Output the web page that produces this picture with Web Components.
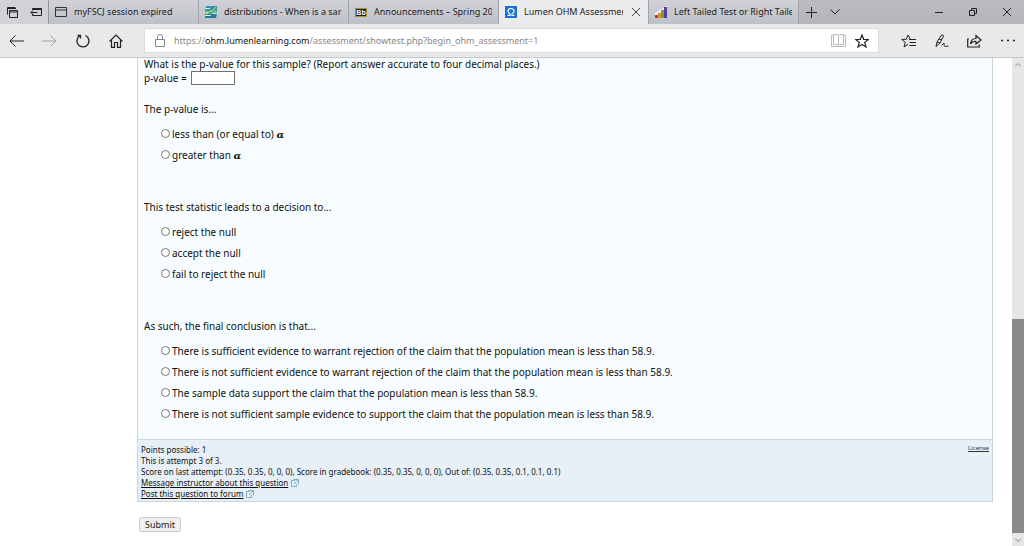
<!DOCTYPE html>
<html lang="en">
<head>
<meta charset="utf-8">
<title>Lumen OHM Assessment</title>
<style>
html, body { height: 100%; }
body { margin: 0; display: flex; flex-direction: column; overflow: hidden; background: #fff; color: #111; font: 10px/16px "Noto Sans", "Open Sans", sans-serif; }
svg { display: block; }
</style>
</head>
<body>
<tab-strip>
  <browser-tab>
    <svg slot="icon" width="12" height="12" viewBox="0 0 12 12" fill="none" stroke="#333"><path d="M.5 1.5h11v9H.5zM.5 4h11"/></svg>
    myFSCJ session expired
  </browser-tab>
  <browser-tab>
    <svg slot="icon" width="12" height="12" viewBox="0 0 12 12"><path d="M1 0h11v4H0z" fill="#3d8fae"/><path d="M0 4h12v4H0z" fill="#46a6a0"/><path d="M0 8h12l-1 4H0z" fill="#1d7fa0"/><path d="M0 2.500h5M0 6.500h3M0 9.500h6M8 7.500h4" stroke="#d5ecf0"/><path d="M1 9l3-3 3-1 4-4M7 8l4-3" stroke="#d2dc4e" fill="none"/></svg>
    distributions - When is a sar
  </browser-tab>
  <browser-tab>
    <svg slot="icon" width="12" height="12" viewBox="0 0 12 12"><rect x=".5" y="2.500" width="11" height="8" fill="#222" stroke="#b08a3c"/><text x="6" y="9" text-anchor="middle" font-family="Liberation Sans" font-weight="700" font-size="7" fill="#fff">Bb</text></svg>
    Announcements – Spring 202
  </browser-tab>
  <browser-tab active>
    <svg slot="icon" width="12" height="12" viewBox="0 0 12 12"><path d="M0 0h12v12H0z" fill="#1b74d2"/><path d="M2.500 9.500h2.500V8C2 6.500 2.500 2.500 6 2.500S10 6.500 7 8v1.500h2.500" fill="none" stroke="#fff" stroke-width="1.200"/></svg>
    Lumen OHM Assessment
  </browser-tab>
  <browser-tab>
    <svg slot="icon" width="12" height="12" viewBox="0 0 12 12"><path d="M0 12V7L11 0h1v12z" fill="#f4eef4"/><path d="M0 9h3v3H0z" fill="#c33"/><path d="M3 7h3v5H3z" fill="#e0902a"/><path d="M6 4h3v8H6z" fill="#6aa832"/><path d="M9 1h3v11H9z" fill="#5b3a9c"/></svg>
    Left Tailed Test or Right Tailed
  </browser-tab>
</tab-strip>
<address-bar></address-bar>
<page-view>
  <question-card>
    <value-prompt></value-prompt>
    <choice-group name="pvalue" heading="The p-value is...">
      <span>less than (or equal to) <math-symbol>α</math-symbol></span>
      <span>greater than <math-symbol>α</math-symbol></span>
    </choice-group>
    <choice-group name="decision" heading="This test statistic leads to a decision to...">
      <span>reject the null</span>
      <span>accept the null</span>
      <span>fail to reject the null</span>
    </choice-group>
    <choice-group name="conclusion" heading="As such, the final conclusion is that...">
      <span>There is sufficient evidence to warrant rejection of the claim that the population mean is less than 58.9.</span>
      <span>There is not sufficient evidence to warrant rejection of the claim that the population mean is less than 58.9.</span>
      <span>The sample data support the claim that the population mean is less than 58.9.</span>
      <span>There is not sufficient sample evidence to support the claim that the population mean is less than 58.9.</span>
    </choice-group>
    <score-summary slot="footer"></score-summary>
  </question-card>
  <submit-button>Submit</submit-button>
</page-view>

<script>
function define(name, html, setup) {
  const template = document.createElement('template');
  template.innerHTML = html;
  customElements.define(name, class extends HTMLElement {
    connectedCallback() {
      if (this.shadowRoot) return;
      this.attachShadow({ mode: 'open' }).append(template.content.cloneNode(true));
      if (setup) setup(this, this.shadowRoot);
    }
  });
}

const iconButton = `button { border: 0; padding: 0; background: none; display: grid; place-items: center; color: inherit; }
  svg { display: block; fill: none; stroke: currentColor; }`;

define('tab-strip', `<style>
  :host { display: flex; flex: none; height: 24px; background: linear-gradient(#babcc2, #b4b5ba); color: #222; }
  ${iconButton}
  .left { display: flex; flex: none; box-sizing: border-box; width: 49px; border-right: 1px solid #94969c; background: #d0d2d8; }
  .left button { width: 24px; }
  .tabs { display: flex; flex: 0 1 750px; min-width: 0; }
  .new button { width: 24px; }
  .new { display: flex; }
  .window { display: flex; margin-left: auto; }
  .window button { width: 34px; }
</style>
<div class="left">
  <button aria-label="Tabs you've set aside"><svg width="12" height="12" viewBox="0 0 12 12"><path d="M3.500 4.500h8v7h-8zM3.500 6h8M1.500 8.500v-7h8M1 2.500h9"/></svg></button>
  <button aria-label="Set these tabs aside"><svg width="12" height="10" viewBox="0 0 12 10"><path d="M2.500 3V1.500h9v7h-9V7M3 2.500h8M.5 5.500h7M3 3.500l-2 2 2 2"/></svg></button>
</div>
<div class="tabs"><slot></slot></div>
<div class="new">
  <button aria-label="New tab"><svg width="11" height="11" viewBox="0 0 11 11"><path d="M5.500 0v11M0 5.500h11"/></svg></button>
  <button aria-label="Show tab previews"><svg width="10" height="6" viewBox="0 0 10 6" stroke="#555"><path d="M.5.5L5 5 9.500.5"/></svg></button>
</div>
<div class="window">
  <button aria-label="Minimize"><svg width="8" height="8" viewBox="0 0 8 8"><path d="M0 4.500h8"/></svg></button>
  <button aria-label="Restore"><svg width="8" height="8" viewBox="0 0 8 8"><path d="M.5 2.500h5v5h-5zM2.500 2V.5h5v5H6"/></svg></button>
  <button aria-label="Close"><svg width="8" height="8" viewBox="0 0 8 8"><path d="M0 0l8 8M8 0L0 8"/></svg></button>
</div>`);

define('browser-tab', `<style>
  :host { display: flex; align-items: center; flex: 1 1 0; min-width: 0; box-sizing: border-box; padding: 0 6px; gap: 7px;
    background: linear-gradient(#d0d2d8, #bdc0c6); border-right: 1px solid #a1a4aa; font-size: 9px; line-height: 24px; color: #222; }
  :host([active]) { background: #eaebed; border-color: #a1a4aa; }
  .title { flex: 1; min-width: 0; overflow: hidden; white-space: nowrap; }
  button { display: none; border: 0; padding: 0; background: none; width: 12px; height: 12px; }
  :host([active]) button { display: grid; place-items: center; }
</style>
<slot name="icon"></slot><div class="title"><slot></slot></div>
<button aria-label="Close tab"><svg width="8" height="8" viewBox="0 0 8 8" stroke="#444"><path d="M0 0l8 8M8 0L0 8"/></svg></button>`,
(host) => { [...host.childNodes].forEach(n => { if (n.nodeType === 3) n.textContent = n.textContent.trim(); }); });

define('address-bar', `<style>
  :host { display: flex; flex: none; align-items: center; box-sizing: border-box; height: 34px; background: #e9e9eb; border-bottom: 1px solid #c8c8ca; color: #222; }
  ${iconButton}
  button { width: 33px; height: 24px; }
  .url { flex: 1; min-width: 0; display: flex; align-items: center; box-sizing: border-box; height: 25px; margin-left: 12px; background: #fff; border: 1px solid #dcdcde; color: #888; }
  .url button { width: 24px; }
  .lock { width: 29px; display: grid; place-items: center; }
  .text { flex: 1; font-size: 9px; line-height: 20px; white-space: nowrap; overflow: hidden; }
  .text b { font-weight: 400; color: #111; }
  .url .star { color: #222; margin-right: 4px; }
  .actions { display: flex; margin-left: 13px; }
</style>
<button aria-label="Back"><svg width="15" height="12" viewBox="0 0 15 12"><path d="M15 6H1M6.500.5L1 6l5.500 5.500"/></svg></button>
<button aria-label="Forward" style="color:#a0a0a2"><svg width="15" height="12" viewBox="0 0 15 12"><path d="M0 6h14M8.500.5L14 6l-5.500 5.500"/></svg></button>
<button aria-label="Refresh"><svg width="14" height="14" viewBox="0 0 14 14" stroke-width="1.300"><path d="M9.500 1.500a6 6 0 1 1-5.500.2M1.500 1.500h3v3"/></svg></button>
<button aria-label="Home"><svg width="14" height="14" viewBox="0 0 14 14" stroke-width="1.200"><path d="M.5 7.500L7 1l6.500 6.500M2.500 6v7.400h3V8.500h3v4.900h3V6"/></svg></button>
<div class="url">
  <span class="lock"><svg width="10" height="13" viewBox="0 0 10 13"><path d="M.5 5.500h9v7h-9zM2.500 5.500V3a2.500 2.500 0 0 1 5 0v2.500"/></svg></span>
  <span class="text">https://<b>ohm.lumenlearning.com</b>/assessment/showtest.php?begin_ohm_assessment=1</span>
  <button aria-label="Reading view" style="color:#bbb"><svg width="15" height="13" viewBox="0 0 15 13"><path d="M2.500.5h4l1 1 1-1h4v10h-4l-1 1-1-1h-4zM7.500 1v10M2 1.500H.5v11h14v-11H13"/></svg></button>
  <button class="star" aria-label="Add to favorites"><svg width="14" height="14" viewBox="0 0 14 14" stroke-width="1.200"><path d="M7 1l1.700 4.300 4.600.2-3.600 2.900 1.300 4.500L7 10.400l-4 2.500 1.300-4.500L.7 5.500l4.600-.2z"/></svg></button>
</div>
<div class="actions">
  <button aria-label="Favorites"><svg width="16" height="14" viewBox="0 0 16 14"><path d="M9.500 5.300L7 1 5.300 5.300.7 5.500l3.600 2.900L3 12.900l4-2.500M8 5.500h7M8.500 8.500H15M8.500 11.500H15"/></svg></button>
  <button aria-label="Add notes"><svg width="14" height="14" viewBox="0 0 14 14"><path d="M1 12.500L2 8 6 1.500Q8-.2 8.500 2L5 9 1 12.500M2 8l3 1M4 5l3 1M6.500 11.500Q10 7.500 9 10.500q-.3 3 4.500 1.500"/></svg></button>
  <button aria-label="Share"><svg width="15" height="14" viewBox="0 0 15 14" stroke-width="1.200"><path d="M2 5H.7v8h11.500v-2.500M3.500 10Q4 4.500 9 4.500V1.500L14 6 9 10V7.500Q5.500 7 3.500 10z"/></svg></button>
  <button aria-label="Settings and more"><svg width="14" height="3" viewBox="0 0 14 3"><path d="M0 1.500h2M6 1.500h2M12 1.500h2" stroke-width="1.400"/></svg></button>
</div>`);

define('page-view', `<style>
  :host { display: flex; flex: 1; min-height: 0; }
  main { flex: 1; min-width: 0; overflow: hidden; padding: 0 19px 0 137px; }
  .scroll { flex: none; width: 12px; display: flex; flex-direction: column; background: #e6e6e6; }
  .cap { height: 13px; display: grid; place-items: center; }
  .gap { flex: 248; } .thumb { flex: 214; background: #8a8a8a; }
  svg { display: block; fill: none; stroke: #8a8a8a; }
</style>
<main><slot></slot></main>
<div class="scroll"><div class="cap"><svg width="6" height="4" viewBox="0 0 6 4"><path d="M0 3.500l3-3 3 3"/></svg></div>
<div class="gap"></div><div class="thumb"></div>
<div class="cap"><svg width="6" height="4" viewBox="0 0 6 4"><path d="M0 .5l3 3 3-3"/></svg></div></div>`);

define('question-card', `<style>
  :host { display: block; border: solid #c8d6de; border-width: 0 1px 1px; background: #f7fdff; }
  .body { display: flex; flex-direction: column; gap: 34px; padding: 0 6px 15px; }
  footer { border-top: 1px solid #c8d6de; background: #e7f0f6; }
</style>
<div class="body"><slot></slot></div><footer><slot name="footer"></slot></footer>`);

define('value-prompt', `<style>
  :host { display: block; margin-bottom: -19px; line-height: 12px; }
  p { margin: 0; }
  label { display: flex; align-items: center; gap: 4px; height: 16px; }
  input { box-sizing: border-box; width: 44px; height: 14px; padding: 0 2px; border: 1px solid #707070; background: #fff; font: inherit; border-radius: 0; }
</style>
<p>What is the p-value for this sample? (Report answer accurate to four decimal places.)</p>
<label>p-value = <input type="text"></label>`);

define('choice-group', `<style>
  :host { display: block; }
  fieldset { border: 0; margin: 0; padding: 0; min-width: 0; }
  legend { padding: 0; margin-bottom: 6px; }
  label { display: flex; align-items: center; gap: 2px; height: 21px; margin-left: 17px; width: fit-content; white-space: nowrap; }
  input { appearance: none; box-sizing: border-box; width: 9px; height: 9px; margin: 0; border: 1px solid #777; border-radius: 50%; background: #fff; }
  input:checked { background: radial-gradient(#333 40%, #fff 45%); }
</style>
<fieldset><legend></legend></fieldset>`,
(host, root) => {
  root.querySelector('legend').textContent = host.getAttribute('heading');
  [...host.children].forEach((child, i) => {
    child.slot = 'option' + i;
    const label = document.createElement('label');
    label.innerHTML = `<input type="radio" name="${host.getAttribute('name')}" value="${i}"><slot name="option${i}"></slot>`;
    root.querySelector('fieldset').append(label);
  });
});

define('math-symbol', `<style>:host { font: italic bold 10px/12px "DejaVu Serif", serif; }</style><slot></slot>`);

define('external-link', `<style>
  :host { display: flex; gap: 3px; align-items: center; }
  a { color: #111; }
  svg { display: block; fill: none; stroke: #7da9cf; }
</style>
<a href="#"><slot></slot></a>
<svg width="8" height="8" viewBox="0 0 8 8"><path d="M4 1.500H.5v6h5V5M2.500.5h5v5M3 5l4-4"/></svg>`);

define('score-summary', `<style>
  :host { display: flex; justify-content: space-between; align-items: flex-start; padding: 4px 3px 2px; font-size: 8px; line-height: 11px; color: #111; }
  .license { font-size: 6px; line-height: 8px; color: #333; }
</style>
<div><div>Points possible: 1</div><div>This is attempt 3 of 3.</div>
<div>Score on last attempt: (0.35, 0.35, 0, 0, 0), Score in gradebook: (0.35, 0.35, 0, 0, 0), Out of: (0.35, 0.35, 0.1, 0.1, 0.1)</div>
<external-link>Message instructor about this question</external-link>
<external-link>Post this question to forum</external-link></div>
<a class="license" href="#">License</a>`);

define('submit-button', `<style>
  :host { display: block; margin: 15px 2px 0; }
  button { display: block; height: 15px; padding: 0 5px; border: 1px solid #ccc; border-radius: 2px; background: #efefef; color: #222; font: 9px/13px "Noto Sans", sans-serif; }
</style>
<button type="submit"><slot></slot></button>`);
</script>
</body>
</html>
